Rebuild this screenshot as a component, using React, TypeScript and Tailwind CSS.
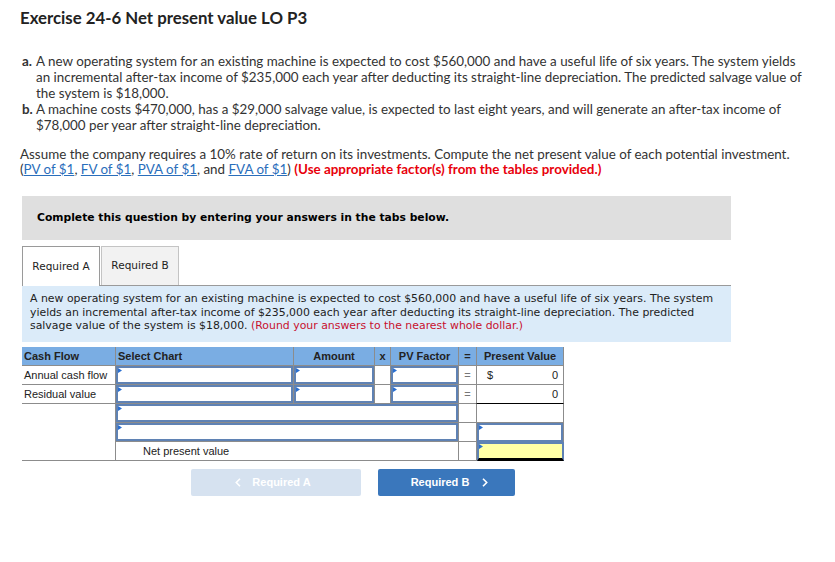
import React from "react";

const Tri = () => (
  <svg className="absolute left-0 top-0" width="4" height="5" viewBox="0 0 4 5">
    <path d="M0 0 L4 2.5 L0 5 Z" fill="#2a6fd1" />
  </svg>
);

const Input = ({ yellow = false, bottomBlack = false }: { yellow?: boolean; bottomBlack?: boolean }) => (
  <div
    className={`relative w-full h-full border-2 border-[#5f82b4] ${yellow ? "bg-[#ffffa6]" : "bg-white"} ${bottomBlack ? "border-b-[3px] border-b-black" : ""}`}
  >
    <Tri />
  </div>
);

const ChevL = () => (
  <svg width="6" height="9" viewBox="0 0 6 9">
    <path d="M5 0.8 L1.3 4.5 L5 8.2" stroke="white" strokeWidth="1.6" fill="none" />
  </svg>
);
const ChevR = () => (
  <svg width="6" height="9" viewBox="0 0 6 9">
    <path d="M1 0.8 L4.7 4.5 L1 8.2" stroke="white" strokeWidth="1.6" fill="none" />
  </svg>
);

export default function App() {
  const body = "font-['Lato',sans-serif]";
  const verd = "font-['DejaVu_Sans',sans-serif]";
  const arial = "font-['Liberation_Sans',Arial,sans-serif]";
  const cell = "border-b border-l border-[#8c8c8c] box-border";
  return (
    <div className="w-[835px] h-[562px] bg-white overflow-hidden">
      <div className={`${body} text-[#222] pl-[20px] pt-[8px]`}>
        <div className="text-[16.8px] leading-[20px] font-bold whitespace-nowrap">
          Exercise 24-6 Net present value LO P3
        </div>
        <div className="mt-[25px] text-[13.4px] leading-[16px] text-[#333] whitespace-nowrap">
          <div className="flex">
            <div className="w-[16px] pl-[2px] font-bold">a.</div>
            <div>
              <div>A new operating system for an existing machine is expected to cost $560,000 and have a useful life of six years. The system yields</div>
              <div>an incremental after-tax income of $235,000 each year after deducting its straight-line depreciation. The predicted salvage value of</div>
              <div>the system is $18,000.</div>
            </div>
          </div>
          <div className="flex">
            <div className="w-[16px] pl-[2px] font-bold">b.</div>
            <div>
              <div>A machine costs $470,000, has a $29,000 salvage value, is expected to last eight years, and will generate an after-tax income of</div>
              <div>$78,000 per year after straight-line depreciation.</div>
            </div>
          </div>
          <div className="mt-[14px] leading-[15px]">
            <div>Assume the company requires a 10% rate of return on its investments. Compute the net present value of each potential investment.</div>
            <div>
              (<span className="text-[#2a6ebb] underline">PV of $1</span>, <span className="text-[#2a6ebb] underline">FV of $1</span>,{" "}
              <span className="text-[#2a6ebb] underline">PVA of $1</span>, and <span className="text-[#2a6ebb] underline">FVA of $1</span>){" "}
              <span className="text-[#e8000b] font-bold">(Use appropriate factor(s) from the tables provided.)</span>
            </div>
          </div>
        </div>
      </div>

      <div className="ml-[22px] mt-[19px] w-[709px]">
        <div className={`${verd} h-[44px] bg-[#dfdfdf] flex items-center pl-[15px] text-[10.75px] font-bold text-black whitespace-nowrap`}>
          Complete this question by entering your answers in the tabs below.
        </div>
        <div className={`${verd} mt-[6px] flex items-end h-[40px] border-b border-[#9a9a9a] text-[10.5px] text-[#222]`}>
          <div className="w-[78px] h-[40px] border border-b-0 border-[#9a9a9a] bg-white flex items-center justify-center relative top-[1px]">
            Required A
          </div>
          <div className="ml-[1px] w-[78px] h-[39px] border border-b-0 border-[#c4c4c4] bg-[#f2f2f2] flex items-center justify-center">
            Required B
          </div>
        </div>
        <div className={`${verd} bg-[#dbebf9] h-[56px] pl-[8px] pt-[6px] text-[10.9px] leading-[13.5px] text-[#222] whitespace-nowrap`}>
          <div>A new operating system for an existing machine is expected to cost $560,000 and have a useful life of six years. The system</div>
          <div>yields an incremental after-tax income of $235,000 each year after deducting its straight-line depreciation. The predicted</div>
          <div>
            salvage value of the system is $18,000. <span className="text-[#c8102e]">(Round your answers to the nearest whole dollar.)</span>
          </div>
        </div>

        <div
          className={`${arial} mt-[5px] grid grid-cols-[93px_178px_81px_16px_68px_18px_88px] grid-rows-[19px_19px_19px_19px_19px_19px] text-[11px] text-[#222]`}
        >
          {/* header */}
          <div className="bg-[#7aade3] font-bold pl-[2px] flex items-center border-b border-[#8c8c8c]">Cash Flow</div>
          <div className={`bg-[#7aade3] font-bold pl-[2px] flex items-center ${cell}`}>Select Chart</div>
          <div className={`bg-[#7aade3] font-bold flex items-center justify-center ${cell}`}>Amount</div>
          <div className={`bg-[#7aade3] font-bold flex items-center justify-center ${cell}`}>x</div>
          <div className={`bg-[#7aade3] font-bold flex items-center justify-center ${cell}`}>PV Factor</div>
          <div className={`bg-[#7aade3] font-bold flex items-center justify-center ${cell}`}>=</div>
          <div className={`bg-[#7aade3] font-bold flex items-center justify-center ${cell} border-r`}>Present Value</div>

          {/* row 1 */}
          <div className="pl-[2px] flex items-center border-b border-[#8c8c8c]">Annual cash flow</div>
          <div className={cell}><Input /></div>
          <div className={cell}><Input /></div>
          <div className={cell}></div>
          <div className={cell}><Input /></div>
          <div className={`${cell} flex items-center justify-center text-[#777]`}>=</div>
          <div className={`${cell} border-r flex items-center justify-between pl-[10px] pr-[5px]`}>
            <span>$</span>
            <span>0</span>
          </div>

          {/* row 2 */}
          <div className="pl-[2px] flex items-center border-b border-[#8c8c8c]">Residual value</div>
          <div className={cell}><Input /></div>
          <div className={cell}><Input /></div>
          <div className={cell}></div>
          <div className={cell}><Input /></div>
          <div className={`${cell} flex items-center justify-center text-[#777]`}>=</div>
          <div className="border-l border-r border-b border-l-[#8c8c8c] border-r-[#8c8c8c] border-b-black flex items-center justify-end pr-[5px]">
            <span>0</span>
          </div>

          {/* row 3 */}
          <div className="row-span-3 border-b border-[#8c8c8c]"></div>
          <div className={`${cell} col-span-4`}><Input /></div>
          <div className={cell}></div>
          <div className={`${cell} border-r`}></div>

          {/* row 4 */}
          <div className={`${cell} col-span-4`}><Input /></div>
          <div className={cell}></div>
          <div className="border-l border-r border-[#8c8c8c]"><Input /></div>

          {/* row 5 */}
          <div className={`${cell} col-span-4 flex items-center pl-[27px]`}>Net present value</div>
          <div className={cell}></div>
          <div className="border-l border-[#8c8c8c]"><Input yellow bottomBlack /></div>
        </div>
      </div>

      <div className={`${arial} mt-[8px] flex text-[11px] font-bold text-white`}>
        <div className="ml-[191px] w-[170px] h-[27px] rounded-[2px] bg-[#d6e2f0] flex items-center justify-center gap-[11px] pr-[6px]">
          <ChevL />
          <span>Required A</span>
        </div>
        <div className="ml-[17px] w-[137px] h-[27px] rounded-[2px] bg-[#3a77bc] flex items-center justify-center gap-[13px] pl-[6px]">
          <span>Required B</span>
          <ChevR />
        </div>
      </div>
    </div>
  );
}
